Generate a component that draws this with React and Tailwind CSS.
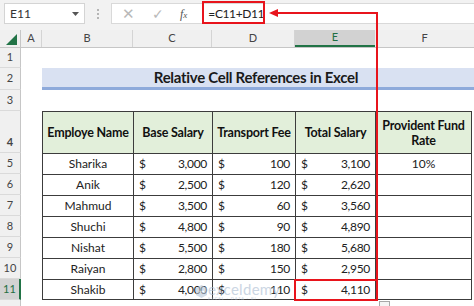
import React from "react";

const rows = [
  ["5", "Sharika", "3,000", "100", "3,100", "10%"],
  ["6", "Anik", "2,500", "120", "2,620", ""],
  ["7", "Mahmud", "3,500", "60", "3,560", ""],
  ["8", "Shuchi", "4,800", "90", "4,890", ""],
  ["9", "Nishat", "5,500", "180", "5,680", ""],
  ["10", "Raiyan", "2,800", "150", "2,950", ""],
  ["11", "Shakib", "4,000", "110", "4,110", ""],
];

function RowHead({ n, selected, h }) {
  return (
    <div
      className={
        "w-[21px] shrink-0 flex items-center justify-center text-[11px] border-b border-[#dadada] " +
        h +
        (selected
          ? " bg-[#d2d2d2] text-[#1e6e43] border-r-2 border-r-[#217346]"
          : " bg-[#f0f0f0] text-[#444] border-r border-r-[#c6c6c6]")
      }
    >
      {n}
    </div>
  );
}

function Money({ v, w, extra }) {
  return (
    <div className={"shrink-0 flex items-center justify-between pl-[5px] pr-[5px] border-l border-t border-[#3c3c3c] " + w + " " + (extra || "")}>
      <span>$</span>
      <span className="tracking-[-0.3px]">{v}</span>
    </div>
  );
}

export default function App() {
  return (
    <div className="relative w-[474px] h-[306px] overflow-hidden bg-white font-['Lato',sans-serif] text-[#222]">
      {/* Formula bar */}
      <div className="h-[30px] bg-[#f2f2f2] flex items-start pt-[3px] pl-[4px]">
        <div className="w-[81px] h-[21px] bg-white border border-[#d4d4d4] flex items-center justify-between pl-[5px] pr-[5px] text-[12px] text-[#333]">
          <span>E11</span>
          <svg width="7" height="4" viewBox="0 0 7 4">
            <path d="M0 0 L7 0 L3.5 4 Z" fill="#555" />
          </svg>
        </div>
        <div className="w-[26px] h-[21px] flex flex-col items-center justify-center gap-[2px]">
          <span className="w-[2px] h-[2px] bg-[#b5b5b5]" />
          <span className="w-[2px] h-[2px] bg-[#b5b5b5]" />
          <span className="w-[2px] h-[2px] bg-[#b5b5b5]" />
        </div>
        <div className="flex-1 h-[21px] bg-white border-l border-t border-b border-[#d9d9d9] flex items-center">
          <span className="ml-[10px] text-[15px] leading-none text-[#b9b9b9]">✕</span>
          <span className="ml-[17px] text-[14px] leading-none text-[#b9b9b9]">✓</span>
          <span className="ml-[16px] text-[12px] italic font-['Liberation_Serif',serif] text-[#555]">
            f<span className="text-[9px]">x</span>
          </span>
          <span className="ml-[21px] text-[12px] tracking-[-0.4px] text-[#222]">=C11+D11</span>
        </div>
      </div>

      {/* Column headers */}
      <div className="h-[18px] flex bg-[#f0f0f0] text-[11px] text-[#444] border-b border-[#c6c6c6]">
        <div className="w-[21px] shrink-0 flex items-end justify-end pr-[3px] pb-[2px] border-r border-[#c6c6c6]">
          <svg width="11" height="11" viewBox="0 0 11 11">
            <path d="M11 0 L11 11 L0 11 Z" fill="#217346" />
          </svg>
        </div>
        <div className="w-[21px] shrink-0 flex items-center justify-center border-r border-[#d4d4d4]">A</div>
        <div className="w-[91px] shrink-0 flex items-center justify-center border-r border-[#d4d4d4]">B</div>
        <div className="w-[79px] shrink-0 flex items-center justify-center border-r border-[#d4d4d4]">C</div>
        <div className="w-[83px] shrink-0 flex items-center justify-center border-r border-[#d4d4d4]">D</div>
        <div className="w-[80px] shrink-0 flex items-center justify-center bg-[#d2d2d2] text-[#1e6e43] border-b-2 border-[#217346]">E</div>
        <div className="w-[99px] shrink-0 flex items-center justify-center">F</div>
      </div>

      {/* Row 1 */}
      <div className="flex">
        <RowHead n="1" h="h-[20px]" />
      </div>

      {/* Row 2 - title */}
      <div className="flex">
        <RowHead n="2" h="h-[22px]" />
        <div className="w-[21px] shrink-0" />
        <div className="w-[432px] shrink-0 h-[22px] bg-[#d9e1f2] border-b-[3px] border-[#8eaadb] flex items-center justify-center pr-[4px] text-[15px] font-bold tracking-[-0.3px] text-[#1a1a1a]">
          Relative Cell References in Excel
        </div>
      </div>

      {/* Row 3 */}
      <div className="flex">
        <RowHead n="3" h="h-[21px]" />
      </div>

      {/* Row 4 - header */}
      <div className="flex text-[12.5px] font-bold text-[#111] leading-[15px]">
        <RowHead n="4" h="h-[42px] items-end pb-[3px]" />
        <div className="w-[21px] shrink-0" />
        <div className="w-[91px] shrink-0 flex items-center justify-center bg-[#e2efda] border-l border-t border-[#3c3c3c] tracking-[-0.2px]">Employe Name</div>
        <div className="w-[79px] shrink-0 flex items-center justify-center bg-[#e2efda] border-l border-t border-[#3c3c3c] tracking-[-0.2px]">Base Salary</div>
        <div className="w-[83px] shrink-0 flex items-center justify-center bg-[#e2efda] border-l border-t border-[#3c3c3c] tracking-[-0.2px]">Transport Fee</div>
        <div className="w-[80px] shrink-0 flex items-center justify-center bg-[#e2efda] border-l border-t border-[#3c3c3c] tracking-[-0.2px]">Total Salary</div>
        <div className="w-[97px] shrink-0 flex flex-col items-center justify-center bg-[#e2efda] border-l border-r border-t border-[#3c3c3c] tracking-[-0.2px]">
          <span>Provident Fund</span>
          <span>Rate</span>
        </div>
      </div>

      {/* Data rows */}
      {rows.map((r, i) => {
        const last = i === rows.length - 1;
        const bb = last ? "border-b" : "";
        return (
          <div key={r[0]} className="flex text-[12px]">
            <RowHead n={r[0]} h="h-[21px]" selected={last} />
            <div className="w-[21px] shrink-0" />
            <div className={"w-[91px] shrink-0 flex items-center justify-center border-l border-t border-[#3c3c3c] " + bb}>{r[1]}</div>
            <Money v={r[2]} w="w-[79px]" extra={bb} />
            <Money v={r[3]} w="w-[83px]" extra={bb} />
            <Money v={r[4]} w="w-[80px]" extra={bb} />
            <div className={"w-[97px] shrink-0 flex items-center justify-center border-l border-r border-t border-[#3c3c3c] " + bb}>{r[5]}</div>
          </div>
        );
      })}

      {/* Row 12 partial */}
      <div className="flex">
        <RowHead n="" h="h-[10px]" />
      </div>

      {/* Quick analysis icon */}
      <div className="absolute left-[379px] top-[301px] w-[11px] h-[9px] bg-[#f4f4f4] border border-[#a8a8a8]" />

      {/* Watermark */}
      <div className="absolute left-[196px] top-[282px] flex items-center gap-[1px] opacity-60 pointer-events-none">
        <svg width="11" height="13" viewBox="0 0 11 13">
          <path d="M5.5 0 L11 3 L11 10 L5.5 13 L0 10 L0 3 Z" fill="#b7c7da" />
          <path d="M3 6.5 L8 6.5" stroke="#fff" strokeWidth="1.5" />
        </svg>
        <div className="flex flex-col leading-none">
          <span className="text-[15px] text-[#a9bbd1] tracking-[0.3px]">exceldemy</span>
          <span className="text-[4px] text-[#a9bbd1] tracking-[1px]">EXCEL · DATA · BI</span>
        </div>
      </div>

      {/* Red annotations */}
      <svg className="absolute left-0 top-0 pointer-events-none" width="474" height="306" viewBox="0 0 474 306">
        <rect x="203" y="2" width="61" height="21" fill="none" stroke="#e8141c" strokeWidth="2" />
        <path d="M269 13 L278 9 L278 17 Z" fill="#e8141c" />
        <path d="M277 13 L378 13" stroke="#e8141c" strokeWidth="2" />
        <path d="M377 12 L377 301" stroke="#e8141c" strokeWidth="2" />
        <rect x="295" y="280" width="82" height="20" fill="none" stroke="#e8141c" strokeWidth="2" />
      </svg>
    </div>
  );
}
